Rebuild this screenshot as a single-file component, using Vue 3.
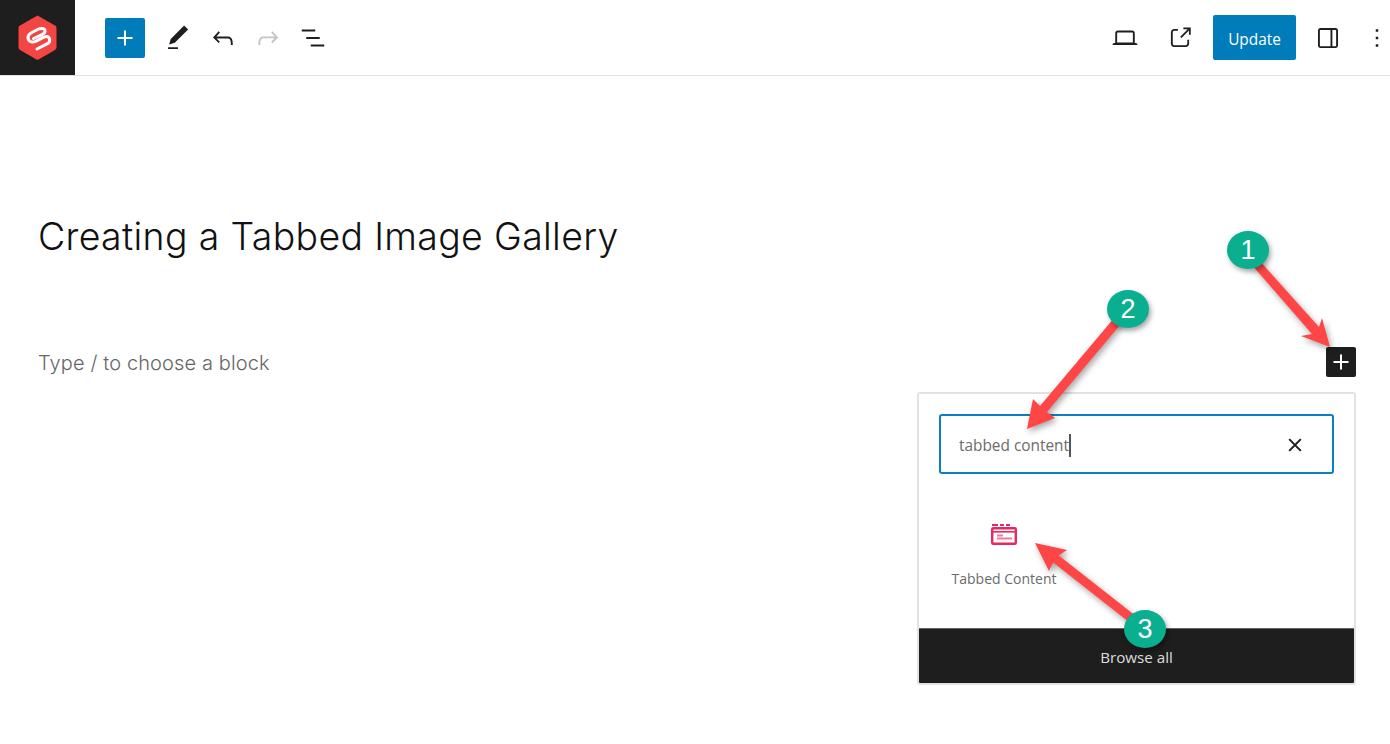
<script setup>
const arrows = [
  '1258,259 1319,327 1322,318 1330,347 1301,336 1312,334 1252,265',
  '1116.6,315 1040,406 1033,399 1027,429 1055,418 1047,412 1123.4,321',
  '1142.8,621.4 1058.8,555.4 1067,550 1035,543 1049,571 1053.2,562.6 1137.2,628.6'
]
</script>

<template>
  <div class="page">
    <header class="topbar">
      <div class="logo">
        <svg width="75" height="75" viewBox="0 0 75 75">
          <path d="M37.5 15.5 L55 25.5 Q56.5 26.4 56.5 28 V47.5 Q56.5 49 55 49.9 L38.5 59.5 Q37.5 60 36.5 59.5 L20 49.9 Q18.5 49 18.5 47.5 V28 Q18.5 26.4 20 25.5 Z" fill="#f44545" />
          <path d="M37 49 L47.5 43.7 C51 41.8 50 36.2 46 36.6 C45 36.7 44 37.2 43 37.7 L35.5 41.4 C31.5 43.2 28 41 28 37.5 C28 35.2 29.3 34 31 33 L37.5 29.5 C41 27.8 44.8 28.3 45 31 C45.1 32.6 44 33.5 42.5 34.3 L33.5 38.5" fill="none" stroke="#fff" stroke-width="3" stroke-linecap="round" />
        </svg>
      </div>

      <div class="tools">
        <button class="add-btn">
          <svg class="icon" viewBox="0 0 24 24"><path d="M18 11.2h-5.2V6h-1.6v5.2H6v1.6h5.2V18h1.6v-5.2H18z" /></svg>
        </button>
        <svg class="icon pencil" viewBox="0 0 24 24"><path d="M20.1 5.1L16.9 2 6.2 12.7l-1.3 4.4 4.5-1.3L20.1 5.1zM4 20.8h8v-1.5H4v1.5z" /></svg>
        <svg class="icon" viewBox="0 0 24 24"><path d="M18.3 11.7c-.6-.6-1.4-.9-2.3-.9H6.7l2.9-3.3-1.1-1-4.5 5L8.5 16l1-1-2.7-2.7H16c.5 0 .9.2 1.3.5 1 1 1 3.4 1 4.5v.3h1.5v-.2c0-1.5 0-4.3-1.5-5.7z" /></svg>
        <svg class="icon redo" viewBox="0 0 24 24"><path d="M15.6 6.5l-1.1 1 2.9 3.3H8c-.9 0-1.7.3-2.3.9-1.4 1.5-1.4 4.2-1.4 5.6v.2h1.5v-.3c0-1.1 0-3.5 1-4.5.3-.3.7-.5 1.3-.5h9.2L14.5 15l1.1 1.1 4.6-4.6-4.6-5z" /></svg>
        <svg class="icon" viewBox="0 0 24 24"><path d="M13.8 5.2H3v1.5h10.8V5.2zm-3.6 12v1.5H21v-1.5H10.2zm7.2-6H6.6v1.5h10.8v-1.5z" /></svg>
      </div>

      <div class="actions">
        <svg class="icon" viewBox="0 0 24 24"><path d="M20.5 16h-.7V8c0-1.1-.9-2-2-2H6.2c-1.1 0-2 .9-2 2v8h-.7c-.8 0-1.5.7-1.5 1.5h20c0-.8-.7-1.5-1.5-1.5zM5.7 8c0-.3.2-.5.5-.5h11.6c.3 0 .5.2.5.5v7.6H5.7V8z" /></svg>
        <svg class="icon external" viewBox="0 0 24 24"><path d="M18.2 17c0 .7-.6 1.2-1.2 1.2H7c-.7 0-1.2-.6-1.2-1.2V7c0-.7.6-1.2 1.2-1.2h3.2V4.2H7C5.5 4.2 4.2 5.5 4.2 7v10c0 1.5 1.2 2.8 2.8 2.8h10c1.5 0 2.8-1.2 2.8-2.8v-3.6h-1.5V17zM14.9 3v1.5h3.7l-6.4 6.4 1.1 1.1 6.4-6.4v3.7h1.5V3h-6.3z" /></svg>
        <button class="update-btn">Update</button>
        <svg class="icon sidebar" viewBox="0 0 24 24"><path d="M18 4H6c-1.1 0-2 .9-2 2v12c0 1.1.9 2 2 2h12c1.1 0 2-.9 2-2V6c0-1.1-.9-2-2-2zM6 18.5c-.3 0-.5-.2-.5-.5V6c0-.3.2-.5.5-.5h8v13H6zm12.5-.5c0 .3-.2.5-.5.5h-2.5v-13H18c.3 0 .5.2.5.5v12z" /></svg>
        <svg class="icon more" viewBox="0 0 24 24"><path d="M13 19h-2v-2h2v2zm0-6h-2v-2h2v2zm0-6h-2V5h2v2z" /></svg>
      </div>
    </header>

    <main class="editor">
      <h1 class="title">Creating a Tabbed Image Gallery</h1>
      <p class="placeholder">Type / to choose a block</p>

      <div class="inline-add">
        <svg class="icon" viewBox="0 0 24 24"><path d="M18 11.2h-5.2V6h-1.6v5.2H6v1.6h5.2V18h1.6v-5.2H18z" /></svg>
      </div>

      <section class="inserter">
        <div class="search">
          <span class="search-text">tabbed content</span>
          <span class="caret"></span>
          <svg class="close" viewBox="0 0 24 24"><path d="M5 5l14 14M19 5L5 19" fill="none" stroke="#1e1e1e" stroke-width="2.4" /></svg>
        </div>
        <div class="results">
          <div class="block-item">
            <svg class="block-icon" viewBox="0 0 26 21">
              <path d="M1 0h6v2H1zM9 0h4v2H9zM15 0h4v2h-4z" fill="#e8275f" />
              <rect x="1.2" y="4.2" width="23.6" height="15.6" rx="1" fill="none" stroke="#e8275f" stroke-width="2.4" />
              <rect x="2" y="7" width="22" height="1.6" fill="#e8275f" />
              <rect x="6" y="10.5" width="6" height="2" fill="#ee7a9c" />
              <rect x="6" y="13.5" width="15" height="2" fill="#ee7a9c" />
            </svg>
            <span class="block-label">Tabbed Content</span>
          </div>
        </div>
        <div class="browse">Browse all</div>
      </section>

      <svg class="arrows" width="1390" height="744" viewBox="0 0 1390 744">
        <polygon v-for="(pts, i) in arrows" :key="i" :points="pts" fill="#ff4646" />
      </svg>
      <div class="badge badge-1">1</div>
      <div class="badge badge-2">2</div>
      <div class="badge badge-3">3</div>
    </main>
  </div>
</template>

<style scoped>
.page {
  width: 1390px;
  height: 744px;
  overflow: hidden;
  position: relative;
  background: #fff;
  font-family: "Open Sans", "Noto Sans", sans-serif;
}

.topbar {
  display: flex;
  align-items: center;
  height: 75px;
  border-bottom: 1px solid #e0e0e0;
}

.logo {
  width: 75px;
  height: 75px;
  background: #1e1e1e;
}

.logo svg {
  display: block;
}

.icon {
  width: 30px;
  height: 30px;
  fill: #1e1e1e;
  flex: none;
  display: block;
}

.tools {
  display: flex;
  align-items: center;
  gap: 15px;
  margin-left: 30px;
  padding-top: 1px;
}

.add-btn {
  width: 40px;
  height: 40px;
  border: 0;
  border-radius: 2px;
  padding: 5px;
  background: #007cba;
  margin-right: 3px;
}

.add-btn .icon {
  fill: #fff;
}

.redo {
  fill: #c4c4c4;
}

.actions {
  display: flex;
  align-items: center;
  margin-left: auto;
  padding-top: 1px;
}

.external {
  width: 28px;
  height: 28px;
  margin-left: 26px;
  margin-right: 1px;
}

.update-btn {
  width: 83px;
  height: 45px;
  margin-left: 18px;
  margin-top: -2px;
  padding-top: 6px;
  border: 0;
  border-radius: 2px;
  background: #007cba;
  color: #fff;
  font-family: inherit;
  font-size: 15.4px;
}

.sidebar {
  margin-left: 17px;
}

.more {
  margin-left: 19px;
  margin-right: -2px;
}

.editor {
  padding: 137px 0 0 38px;
}

.title {
  margin: 0;
  font-family: Inter, sans-serif;
  font-size: 37.4px;
  font-weight: 300;
  letter-spacing: 0.35px;
  line-height: 48px;
  color: #111;
}

.placeholder {
  margin: 87px 0 0;
  font-family: Inter, sans-serif;
  font-size: 20px;
  font-weight: 300;
  letter-spacing: 0.12px;
  line-height: 30px;
  color: #666;
}

.inline-add {
  position: absolute;
  left: 1325.5px;
  top: 346.5px;
  width: 30px;
  height: 30px;
  border-radius: 2px;
  background: #1e1e1e;
}

.inline-add .icon {
  fill: #fff;
}

.inserter {
  position: absolute;
  left: 917px;
  top: 392px;
  width: 439px;
  height: 293px;
  box-sizing: border-box;
  display: flex;
  flex-direction: column;
  border: 2px solid #e2e2e2;
  border-radius: 3px;
  background: #fff;
  overflow: hidden;
}

.search {
  display: flex;
  align-items: center;
  height: 60px;
  box-sizing: border-box;
  margin: 20px 20px 0;
  padding: 2px 27px 0 18px;
  border: 2.5px solid #0a80c0;
  border-radius: 3px;
}

.search-text {
  font-size: 15.4px;
  color: #6b6b6b;
}

.caret {
  width: 1.5px;
  height: 23px;
  background: #555;
}

.close {
  width: 20px;
  height: 20px;
  margin-left: auto;
}

.results {
  flex: 1;
  padding: 50px 0 0 20px;
}

.block-item {
  display: flex;
  flex-direction: column;
  align-items: center;
  width: 130px;
}

.block-icon {
  width: 26px;
  height: 21px;
}

.block-label {
  margin-top: 24px;
  font-size: 14px;
  color: #6b6b6b;
}

.browse {
  flex: none;
  height: 55px;
  padding-top: 18px;
  box-sizing: border-box;
  background: #1e1e1e;
  border-top: 1px solid #666;
  color: #ddd;
  font-size: 15.2px;
  text-align: center;
}

.arrows {
  position: absolute;
  left: 0;
  top: 0;
  pointer-events: none;
  filter: drop-shadow(2px 3px 3px rgba(0, 0, 0, 0.35));
}

.badge {
  position: absolute;
  width: 42px;
  height: 38px;
  border-radius: 50%;
  background: #0aaf8f;
  color: #fff;
  font-family: "Liberation Sans", sans-serif;
  font-size: 27px;
  line-height: 38px;
  text-align: center;
  box-shadow: 2px 3px 5px rgba(0, 0, 0, 0.35);
}

.badge-1 { left: 1227px; top: 231px; }
.badge-2 { left: 1107px; top: 290px; }
.badge-3 { left: 1124px; top: 610px; }
</style>
